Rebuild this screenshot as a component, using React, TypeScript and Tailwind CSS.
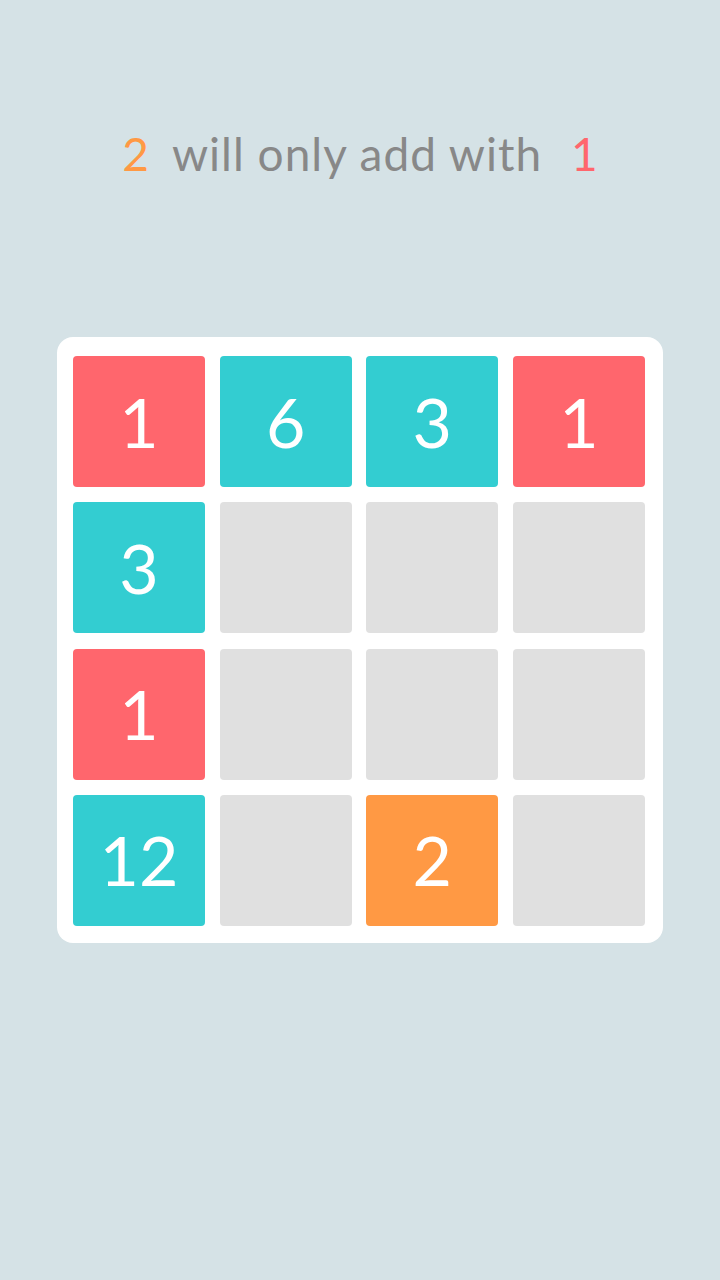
const tiles: (number | null)[] = [1, 6, 3, 1, 3, null, null, null, 1, null, null, null, 12, null, 2, null];

function tileColor(v: number | null) {
  if (v === null) return "bg-[#e0e0e0]";
  if (v === 1) return "bg-[#ff666d]";
  if (v === 2) return "bg-[#ff9944]";
  return "bg-[#33cdd1]";
}

export default function App() {
  return (
    <div
      className="w-[720px] h-[1280px] bg-[#d5e2e6] flex flex-col items-center"
      style={{ fontFamily: "Lato, 'Open Sans', sans-serif" }}
    >
      <div className="mt-[122px] h-[64px] flex items-center justify-center text-[46px] leading-none">
        <span className="text-[#ff9944]">2</span>
        <span className="ml-[23px] mr-[29px] text-[#888888] tracking-[1px]">will only add with</span>
        <span className="text-[#ff666d]">1</span>
      </div>

      <div className="mt-[151px] w-[606px] h-[606px] bg-white rounded-[16px] pt-[19px] pl-[16px]">
        <div className="w-[572px] grid grid-cols-4 gap-x-[14.67px] gap-y-[15.3px]">
          {tiles.map((v, i) => (
            <div
              key={i}
              className={`h-[131px] rounded-[4px] flex items-center justify-center text-white text-[68px] leading-none ${tileColor(v)}`}
            >
              {v}
            </div>
          ))}
        </div>
      </div>
    </div>
  );
}
